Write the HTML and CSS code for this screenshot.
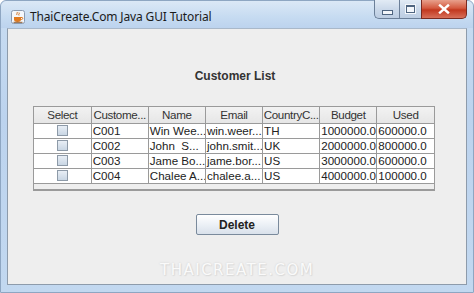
FILE: index.html
```html
<!DOCTYPE html>
<html lang="en">
<head>
    <meta charset="UTF-8">
    <title>ThaiCreate.Com Java GUI Tutorial</title>
    <link rel="stylesheet" href="styles.css">
</head>
<body>
    <div class="window">
        <div class="titlebar">
            <div class="app-icon">
                <svg width="14" height="14" viewBox="0 0 14 14">
                    <rect x="0.5" y="0.5" width="13" height="13" rx="2" fill="#f4f7fb" stroke="#8a9ab0"/>
                    <path d="M6 2c1 1-1 2 0 3M8 2.5c1 1-1 2 0 3" stroke="#d0701f" stroke-width="1" fill="none"/>
                    <path d="M3 7h7v2.5c0 1.5-1 2.5-3.5 2.5S3 11 3 9.5z" fill="#e07a20"/>
                    <path d="M10 7.5h1.2c.8 0 .8 2-.5 2H10" stroke="#e07a20" fill="none"/>
                    <rect x="2.5" y="11.8" width="9" height="1" fill="#8a5a30"/>
                </svg>
            </div>
            <span class="title-text">ThaiCreate.Com Java GUI Tutorial</span>
            <div class="caption-buttons">
                <div class="cap-btn cap-min"><span class="min-bar"></span></div>
                <div class="cap-btn cap-max"><span class="max-box"></span></div>
                <div class="cap-btn cap-close">
                    <svg width="12" height="10" viewBox="0 0 12 10">
                        <path d="M2 1.5l8 7M10 1.5l-8 7" stroke="#fff" stroke-width="2.4" stroke-linecap="square"/>
                    </svg>
                </div>
            </div>
        </div>

        <div class="content">
            <h1 class="heading">Customer List</h1>

            <div class="scroll-pane">
                <table class="grid">
                    <thead>
                        <tr>
                            <th>Select</th>
                            <th>Custome...</th>
                            <th>Name</th>
                            <th>Email</th>
                            <th>CountryC...</th>
                            <th>Budget</th>
                            <th>Used</th>
                        </tr>
                    </thead>
                    <tbody>
                        <tr>
                            <td class="chk"><span class="box"></span></td>
                            <td>C001</td>
                            <td>Win Wee...</td>
                            <td>win.weer...</td>
                            <td>TH</td>
                            <td>1000000.0</td>
                            <td>600000.0</td>
                        </tr>
                        <tr>
                            <td class="chk"><span class="box"></span></td>
                            <td>C002</td>
                            <td>John&nbsp;&nbsp;S...</td>
                            <td>john.smit...</td>
                            <td>UK</td>
                            <td>2000000.0</td>
                            <td>800000.0</td>
                        </tr>
                        <tr>
                            <td class="chk"><span class="box"></span></td>
                            <td>C003</td>
                            <td>Jame Bo...</td>
                            <td>jame.bor...</td>
                            <td>US</td>
                            <td>3000000.0</td>
                            <td>600000.0</td>
                        </tr>
                        <tr>
                            <td class="chk"><span class="box"></span></td>
                            <td>C004</td>
                            <td>Chalee A...</td>
                            <td>chalee.a...</td>
                            <td>US</td>
                            <td>4000000.0</td>
                            <td>100000.0</td>
                        </tr>
                    </tbody>
                </table>
            </div>

            <button class="delete-btn">Delete</button>

            <div class="watermark">THAICREATE.COM</div>
        </div>
    </div>
</body>
</html>
```

FILE: styles.css
```css
body {
    margin: 0;
    padding: 0;
    width: 474px;
    height: 293px;
    overflow: hidden;
    background: #ffffff;
    font-family: "Liberation Sans", Arial, sans-serif;
}

.window {
    width: 474px;
    height: 293px;
    box-sizing: border-box;
    display: flex;
    flex-direction: column;
    background: linear-gradient(to bottom, #c9ddf2 0%, #bcd3ee 40%, #c2d8f0 100%);
    border: 1px solid #8ea6c2;
    border-radius: 6px 6px 0 0;
}

.titlebar {
    height: 27px;
    display: flex;
    align-items: flex-start;
    background: linear-gradient(to bottom, #dbe8f6 0%, #c6dbf1 60%, #bcd3ee 100%);
    border-radius: 6px 6px 0 0;
}

.app-icon {
    width: 14px;
    height: 14px;
    margin: 9px 0 0 10px;
}

.app-icon svg {
    display: block;
}

.title-text {
    margin: 8px 0 0 5px;
    font-family: "Noto Sans", "Open Sans", sans-serif;
    font-size: 12px;
    line-height: 16px;
    color: #1a1a1a;
    letter-spacing: -0.15px;
}

.caption-buttons {
    margin-left: auto;
    margin-right: 6px;
    display: flex;
    height: 19px;
    margin-top: -1px;
}

.cap-btn {
    height: 19px;
    box-sizing: border-box;
    display: flex;
    align-items: center;
    justify-content: center;
    border: 1px solid #6b7f98;
    border-top: none;
}

.cap-min {
    width: 25px;
    border-radius: 0 0 0 5px;
    border-right: none;
    background: linear-gradient(to bottom, #e2ebf5 0%, #cbd9ea 50%, #bccde2 100%);
}

.cap-max {
    width: 22px;
    border-right: none;
    background: linear-gradient(to bottom, #e2ebf5 0%, #cbd9ea 50%, #bccde2 100%);
}

.cap-close {
    width: 46px;
    border-radius: 0 0 5px 0;
    border-color: #7a2a20;
    background: linear-gradient(to bottom, #e8a08c 0%, #d45a40 45%, #c2381f 55%, #d8705a 100%);
}

.min-bar {
    display: block;
    width: 9px;
    height: 3px;
    margin-top: 6px;
    background: #f3f6fa;
    border: 1px solid #4f6580;
}

.max-box {
    display: block;
    width: 7px;
    height: 5px;
    border: 1px solid #4f6580;
    border-top-width: 2px;
    background: #f3f6fa;
    box-shadow: 0 0 0 1px #f3f6fa;
}

.content {
    flex: 1;
    margin: 0 6px 7px 6px;
    background: #eeeeee;
    border: 1px solid #8d9bab;
    border-top-color: #a9b8c9;
    display: flex;
    flex-direction: column;
    align-items: center;
    position: relative;
}

.heading {
    margin: 40px 0 0 0;
    font-size: 12px;
    line-height: 15px;
    font-weight: bold;
    color: #333333;
    transform: translateX(-2px);
}

.scroll-pane {
    align-self: flex-start;
    margin: 22px 0 0 25px;
    width: 400px;
    height: 82px;
    border: 1px solid #9a9a9a;
    border-bottom-width: 2px;
    background: #eeeeee;
}

.grid {
    border-collapse: collapse;
    table-layout: fixed;
    width: 400px;
    font-size: 11.6px;
    color: #222222;
}

.grid th {
    height: 16px;
    padding: 0;
    font-weight: normal;
    font-size: 11.6px;
    letter-spacing: -0.35px;
    text-align: center;
    color: #333333;
    background: linear-gradient(to bottom, #f2f2f2, #e6e6e6);
    border-right: 1px solid #9a9a9a;
    border-bottom: 1px solid #9a9a9a;
    white-space: nowrap;
    overflow: hidden;
    line-height: 16px;
}

.grid th:last-child,
.grid td:last-child {
    border-right: none;
}

.grid td {
    height: 14px;
    padding: 0 0 0 1px;
    background: #ffffff;
    border-right: 1px solid #9a9a9a;
    border-bottom: 1px solid #9a9a9a;
    white-space: nowrap;
    overflow: hidden;
    line-height: 14px;
}

.grid td.chk {
    text-align: center;
    padding: 0;
}

.box {
    display: inline-block;
    width: 11px;
    height: 11px;
    vertical-align: middle;
    margin-top: -2px;
    border: 1px solid #8d9aa8;
    background: linear-gradient(to bottom, #e8eef5 0%, #c9d6e4 100%);
    box-sizing: border-box;
}

.delete-btn {
    margin-top: 23px;
    width: 83px;
    height: 21px;
    font-family: "Liberation Sans", Arial, sans-serif;
    font-size: 12px;
    font-weight: bold;
    color: #222222;
    border: 1px solid #7a8a9c;
    border-radius: 2px;
    background: linear-gradient(to bottom, #ffffff 0%, #eef2f7 45%, #d9e1eb 100%);
    padding: 0;
}

.watermark {
    position: absolute;
    left: 152px;
    top: 232px;
    font-family: "DejaVu Sans", sans-serif;
    font-size: 15px;
    letter-spacing: 1.5px;
    color: #fafafa;
    text-shadow: 0 0 2px #cfcfcf, 1px 1px 1px #dddddd;
}
```
